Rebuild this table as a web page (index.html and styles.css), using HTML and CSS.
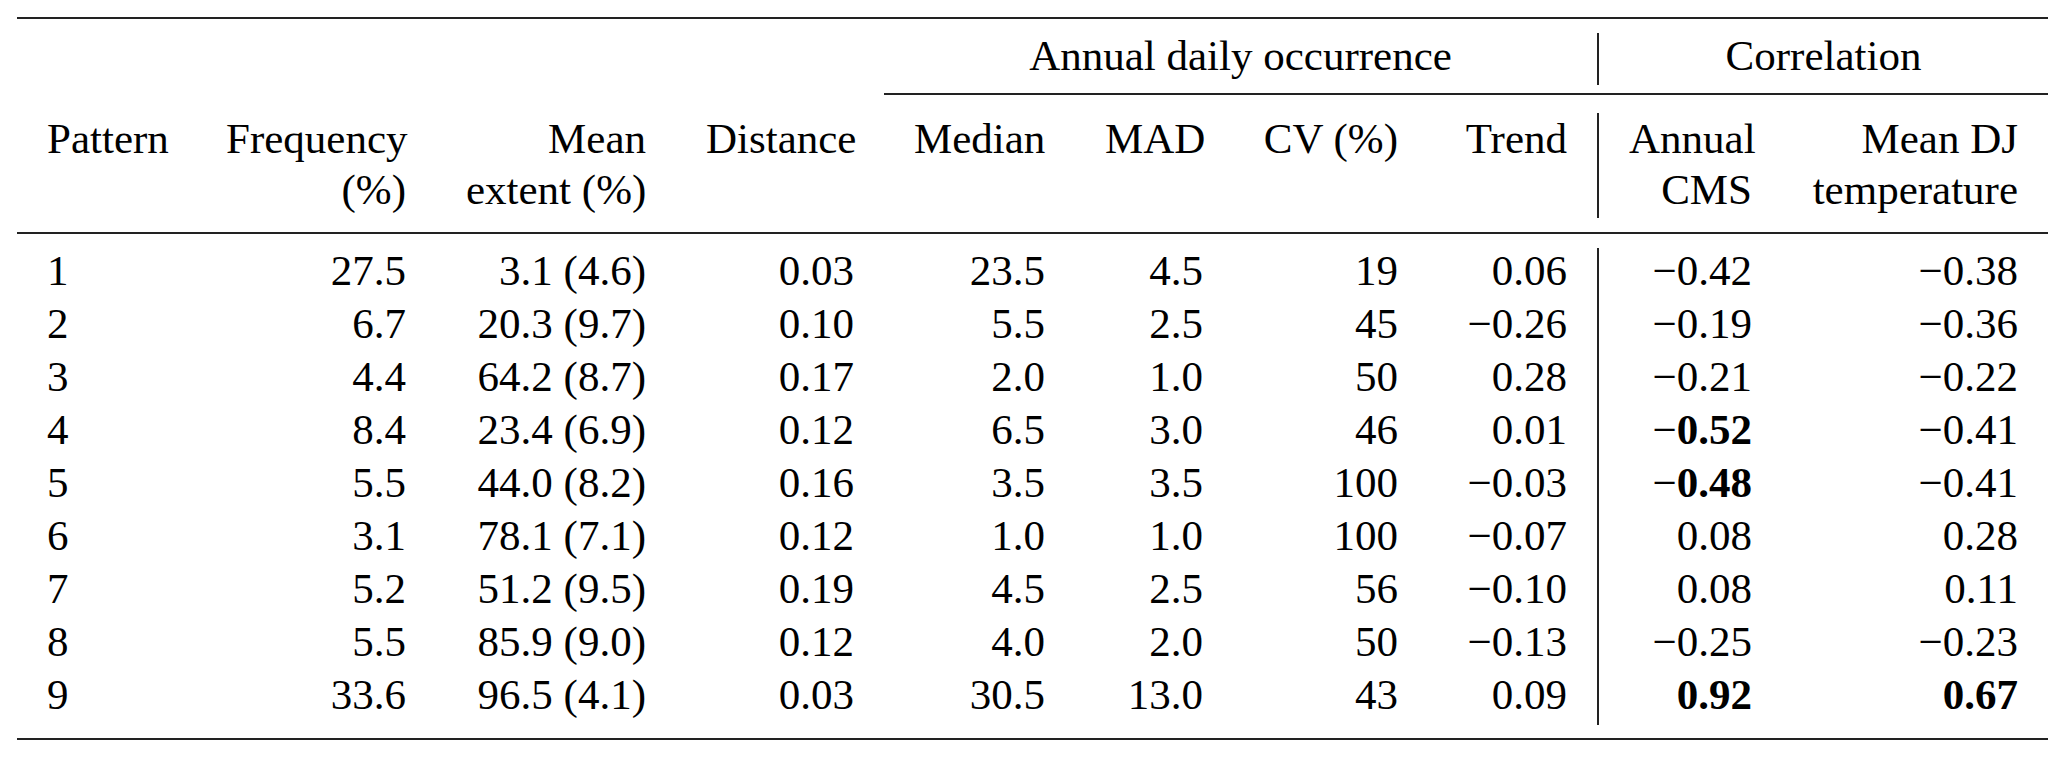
FILE: index.html
```html
<!DOCTYPE html>
<html lang="en">
<head>
<meta charset="utf-8">
<title>Pattern statistics</title>
<link rel="stylesheet" href="styles.css">
</head>
<body>
<div class="page">
  <div class="tbl">
    <div class="rule"></div>
    <div class="gap g14"></div>

    <div class="h1 span-a"></div>
    <div class="h1 span-b">Annual daily occurrence</div>
    <div class="h1 span-c">Correlation</div>

    <div class="gap g8"></div>
    <div class="rule mid"></div>
    <div class="gap g18"></div>

    <div class="h2 left">Pattern</div>
    <div class="h2">Frequency<br>(%)</div>
    <div class="h2">Mean<br>extent (%)</div>
    <div class="h2">Distance</div>
    <div class="h2">Median</div>
    <div class="h2">MAD</div>
    <div class="h2">CV (%)</div>
    <div class="h2">Trend</div>
    <div class="h2 bar">Annual<br>CMS</div>
    <div class="h2">Mean DJ<br>temperature</div>

    <div class="gap g14"></div>
    <div class="rule"></div>
    <div class="gap g14"></div>

    <div class="c left">1</div><div class="c">27.5</div><div class="c">3.1 (4.6)</div><div class="c">0.03</div><div class="c">23.5</div><div class="c">4.5</div><div class="c">19</div><div class="c">0.06</div><div class="c bar">−0.42</div><div class="c">−0.38</div>
    <div class="c left">2</div><div class="c">6.7</div><div class="c">20.3 (9.7)</div><div class="c">0.10</div><div class="c">5.5</div><div class="c">2.5</div><div class="c">45</div><div class="c">−0.26</div><div class="c bar">−0.19</div><div class="c">−0.36</div>
    <div class="c left">3</div><div class="c">4.4</div><div class="c">64.2 (8.7)</div><div class="c">0.17</div><div class="c">2.0</div><div class="c">1.0</div><div class="c">50</div><div class="c">0.28</div><div class="c bar">−0.21</div><div class="c">−0.22</div>
    <div class="c left">4</div><div class="c">8.4</div><div class="c">23.4 (6.9)</div><div class="c">0.12</div><div class="c">6.5</div><div class="c">3.0</div><div class="c">46</div><div class="c">0.01</div><div class="c bar">−<b>0.52</b></div><div class="c">−0.41</div>
    <div class="c left">5</div><div class="c">5.5</div><div class="c">44.0 (8.2)</div><div class="c">0.16</div><div class="c">3.5</div><div class="c">3.5</div><div class="c">100</div><div class="c">−0.03</div><div class="c bar">−<b>0.48</b></div><div class="c">−0.41</div>
    <div class="c left">6</div><div class="c">3.1</div><div class="c">78.1 (7.1)</div><div class="c">0.12</div><div class="c">1.0</div><div class="c">1.0</div><div class="c">100</div><div class="c">−0.07</div><div class="c bar">0.08</div><div class="c">0.28</div>
    <div class="c left">7</div><div class="c">5.2</div><div class="c">51.2 (9.5)</div><div class="c">0.19</div><div class="c">4.5</div><div class="c">2.5</div><div class="c">56</div><div class="c">−0.10</div><div class="c bar">0.08</div><div class="c">0.11</div>
    <div class="c left">8</div><div class="c">5.5</div><div class="c">85.9 (9.0)</div><div class="c">0.12</div><div class="c">4.0</div><div class="c">2.0</div><div class="c">50</div><div class="c">−0.13</div><div class="c bar">−0.25</div><div class="c">−0.23</div>
    <div class="c left">9</div><div class="c">33.6</div><div class="c">96.5 (4.1)</div><div class="c">0.03</div><div class="c">30.5</div><div class="c">13.0</div><div class="c">43</div><div class="c">0.09</div><div class="c bar"><b>0.92</b></div><div class="c"><b>0.67</b></div>

    <div class="gap g13"></div>
    <div class="rule"></div>
  </div>
</div>
</body>
</html>
```

FILE: styles.css
```css
* {
  box-sizing: border-box;
}

html, body {
  margin: 0;
  padding: 0;
  background: #ffffff;
}

.page {
  padding: 17px 0 0 17px;
}

.tbl {
  display: grid;
  grid-template-columns: 179px 240px 240px 208px 191px 158px 195px 169px 185px 266px;
  width: 2031px;
  font-family: "Liberation Serif", "Times New Roman", serif;
  font-size: 43px;
  color: #000000;
}

.rule {
  grid-column: 1 / -1;
  height: 2px;
  background: #222222;
}

.rule.mid {
  grid-column: 5 / -1;
}

.gap {
  grid-column: 1 / -1;
}

.g8 { height: 8px; }
.g13 { height: 13px; }
.g14 { height: 14px; }
.g18 { height: 18px; }

.h1 {
  height: 52px;
  line-height: 45px;
  text-align: center;
  white-space: nowrap;
}

.span-a { grid-column: 1 / 5; }
.span-b { grid-column: 5 / 9; }
.span-c {
  grid-column: 9 / 11;
  border-left: 2px solid #222222;
}

.h2 {
  height: 105px;
  line-height: 51px;
  padding: 0 30px;
  text-align: right;
  white-space: nowrap;
}

.c {
  line-height: 45px;
  padding: 0 30px 8px;
  text-align: right;
  white-space: nowrap;
}

.left {
  text-align: left;
}

.bar {
  border-left: 2px solid #222222;
}

b {
  font-weight: 700;
}
```
